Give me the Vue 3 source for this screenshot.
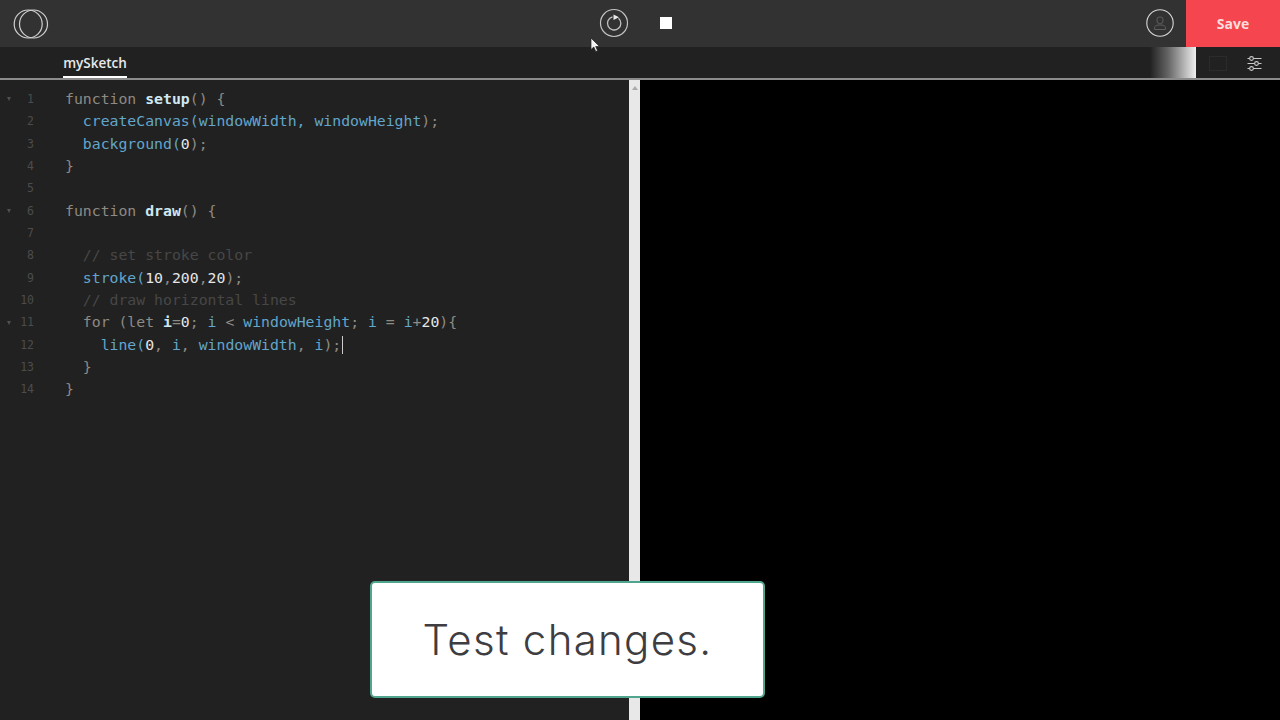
<script setup>
const T = (t, c) => ({ t, c })
const lines = [
  { fold: true, parts: [T('function ', 'kw'), T('setup', 'def'), T('() {', 'kw')] },
  { parts: [T('  createCanvas(windowWidth, windowHeight', 'fn'), T(');', 'kw')] },
  { parts: [T('  background(', 'fn'), T('0', 'num'), T(');', 'kw')] },
  { parts: [T('}', 'kw')] },
  { parts: [] },
  { fold: true, parts: [T('function ', 'kw'), T('draw', 'def'), T('() {', 'kw')] },
  { parts: [] },
  { parts: [T('  // set stroke color', 'com')] },
  { parts: [T('  stroke(', 'fn'), T('10', 'num'), T(',', 'kw'), T('200', 'num'), T(',', 'kw'), T('20', 'num'), T(');', 'kw')] },
  { parts: [T('  // draw horizontal lines', 'com')] },
  { fold: true, parts: [T('  for (let ', 'kw'), T('i', 'def'), T('=', 'kw'), T('0', 'num'), T('; ', 'kw'), T('i', 'fn'), T(' < ', 'kw'), T('windowHeight', 'fn'), T('; ', 'kw'), T('i', 'fn'), T(' = ', 'kw'), T('i', 'fn'), T('+', 'kw'), T('20', 'num'), T('){', 'kw')] },
  { cursor: true, parts: [T('    line(', 'fn'), T('0', 'num'), T(', ', 'kw'), T('i', 'fn'), T(', ', 'kw'), T('windowWidth', 'fn'), T(', ', 'kw'), T('i', 'fn'), T(');', 'kw')] },
  { parts: [T('  }', 'kw')] },
  { parts: [T('}', 'kw')] }
]
</script>

<template>
  <div class="app">
    <header class="topbar">
      <div class="logo">
        <svg width="36" height="36" viewBox="0 0 36 36" fill="none" stroke="#d0d0d0" stroke-width="1.2">
          <circle cx="15.2" cy="18" r="14" />
          <circle cx="20.500" cy="18" r="14" />
        </svg>
      </div>
      <div class="controls">
        <svg class="play" width="30" height="30" viewBox="0 0 30 30" fill="none" stroke="#c4c4c4">
          <circle cx="15" cy="15" r="13.500" stroke-width="1.2" />
          <path d="M13.500 8.800A6.700 6.700 0 1 0 19.500 10.200" stroke-width="1.3" />
          <path d="M14.500 6.500L20 9.300L14.500 12Z" fill="#e8e8e8" stroke="none" />
        </svg>
        <div class="stop"></div>
      </div>
      <div class="account">
        <svg width="28" height="28" viewBox="0 0 28 28" fill="none">
          <circle cx="14" cy="14" r="13.200" stroke="#d8d8d8" stroke-width="1.1" />
          <rect x="11" y="8" width="6" height="6.500" rx="2.500" stroke="#5e5e5e" />
          <path d="M8.500 20.500v-2c0-1.200 2-2.200 3.500-2.500h4c1.500 .3 3.500 1.300 3.500 2.500v2Z" stroke="#5e5e5e" />
        </svg>
      </div>
      <button class="save">Save</button>
    </header>

    <nav class="tabs">
      <div class="tab">mySketch</div>
      <div class="fade"></div>
      <div class="tab-icons">
        <div class="ghost"></div>
        <svg width="15" height="15" viewBox="0 0 15 15" fill="none" stroke="#c8c8c8" stroke-width="1.1">
          <path d="M0.500 2.500h14M0.500 7.500h14M0.500 12.500h14" />
          <circle cx="4.500" cy="2.500" r="1.900" fill="#222" />
          <circle cx="9.500" cy="7.500" r="1.900" fill="#222" />
          <circle cx="4.500" cy="12.500" r="1.900" fill="#222" />
        </svg>
      </div>
    </nav>

    <main class="workspace">
      <section class="editor">
        <div v-for="(line, i) in lines" :key="i" class="line">
          <span class="fold"><i v-if="line.fold"></i></span>
          <span class="num-col">{{ i + 1 }}</span>
          <span class="code"><span v-for="(p, j) in line.parts" :key="j" :class="p.c">{{ p.t }}</span><span v-if="line.cursor" class="cursor"></span></span>
        </div>
      </section>
      <div class="splitter"><span></span></div>
      <section class="preview"></section>
    </main>

    <svg class="pointer" width="12" height="16" viewBox="0 0 12 16">
      <path d="M1 1V12.500L3.800 10L5.800 14.500L7.600 13.700L5.700 9.500H9.500Z" fill="#f4f4f4" stroke="#222" stroke-width="0.7" />
    </svg>
    <div class="caption">Test changes.</div>
  </div>
</template>

<style scoped>
.app {
  position: relative;
  width: 1280px;
  height: 720px;
  overflow: hidden;
  display: flex;
  flex-direction: column;
  background: #212121;
  font-family: "Open Sans", "Liberation Sans", sans-serif;
}
.topbar {
  height: 47px;
  flex: none;
  display: flex;
  align-items: center;
  background: #323232;
}
.logo {
  width: 599px;
  padding-left: 13px;
  box-sizing: border-box;
  display: flex;
  align-items: center;
  height: 100%;
}
.controls {
  display: flex;
  align-items: center;
  gap: 31px;
  height: 100%;
  flex: 1;
  margin-top: -1px;
}
.stop {
  width: 12px;
  height: 12px;
  background: #fff;
}
.account {
  display: flex;
  margin-right: 12px;
  margin-top: -1px;
}
.save {
  width: 94px;
  height: 47px;
  border: 0;
  padding: 0;
  background: #f5454f;
  color: #fbdcdc;
  font: 700 14px "Open Sans", "Liberation Sans", sans-serif;
}
.tabs {
  height: 31px;
  flex: none;
  display: flex;
  align-items: stretch;
  background: #212121;
  padding-left: 63px;
}
.tab {
  width: 64px;
  box-sizing: border-box;
  border-bottom: 2px solid #fff;
  color: #e9e9e9;
  font-size: 13.500px;
  font-weight: 600;
  text-align: center;
  line-height: 32px;
  height: 31px;
  white-space: nowrap;
}
.fade {
  margin-left: auto;
  width: 46px;
  background: linear-gradient(90deg, #212121 0%, #666 40%, #f0f0f0 100%);
}
.tab-icons {
  width: 84px;
  display: flex;
  align-items: center;
  box-sizing: border-box;
  padding-left: 13px;
  padding-top: 2px;
  gap: 20px;
}
.ghost {
  width: 16px;
  height: 13px;
  border: 1px solid #2b2b2b;
}
.workspace {
  flex: 1;
  display: flex;
  min-height: 0;
  border-top: 2px solid #8c8c8c;
}
.editor {
  width: 629px;
  padding-top: 8.100px;
  box-sizing: border-box;
  background: #212121;
  font-family: "DejaVu Sans Mono", "Liberation Mono", monospace;
  font-size: 14.800px;
}
.line {
  height: 22.330px;
  line-height: 22.330px;
  display: flex;
  white-space: pre;
}
.fold {
  width: 18px;
  flex: none;
  display: flex;
  align-items: center;
  justify-content: flex-end;
  padding-right: 7px;
  box-sizing: border-box;
}
.fold i {
  width: 0;
  height: 0;
  border-left: 2.500px solid transparent;
  border-right: 2.500px solid transparent;
  border-top: 4px solid #505050;
}
.num-col {
  width: 16px;
  flex: none;
  text-align: right;
  color: #4c4c4c;
  font-size: 11.500px;
}
.code {
  margin-left: 31px;
  display: flex;
  align-items: center;
  height: 22.330px;
}
.kw { color: #8e8a84; }
.def { color: #cfe8f3; font-weight: 700; }
.fn { color: #62a6cb; }
.num { color: #e6e6e6; }
.com { color: #474747; }
.cursor {
  width: 1px;
  height: 18px;
  background: #ccc;
  margin-left: 1px;
}
.splitter {
  width: 11px;
  flex: none;
  background: #e8e8e8;
  display: flex;
  justify-content: center;
  padding-top: 6px;
  box-sizing: border-box;
}
.splitter span {
  width: 0;
  height: 0;
  border-left: 3px solid transparent;
  border-right: 3px solid transparent;
  border-bottom: 4px solid #aaa;
}
.preview {
  flex: 1;
  background: #000;
}
.pointer {
  position: absolute;
  left: 590px;
  top: 37px;
}
.caption {
  position: absolute;
  left: 370px;
  top: 581px;
  width: 395px;
  height: 117px;
  box-sizing: border-box;
  border: 2px solid #4fa58e;
  border-radius: 5px;
  background: #fff;
  color: #3d3d42;
  font: 300 42px/113px Inter, "Open Sans", sans-serif;
  letter-spacing: 1.300px;
  text-align: center;
  white-space: nowrap;
}
</style>
